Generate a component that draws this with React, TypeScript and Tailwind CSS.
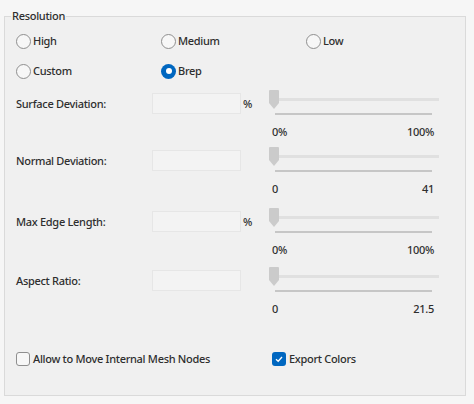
import React from 'react';

const font = { fontFamily: '"Noto Sans", "Open Sans", sans-serif' };

const Radio = ({ label, checked }: { label: string; checked?: boolean }) => (
  <div className="flex items-center h-[20px] w-[145px]">
    {checked ? (
      <span className="w-[15px] h-[15px] rounded-full bg-[#0067c0] flex items-center justify-center">
        <span className="w-[6px] h-[6px] rounded-full bg-white" />
      </span>
    ) : (
      <span className="w-[15px] h-[15px] rounded-full border border-[#8f8f8f] bg-[#f7f7f7]" />
    )}
    <span className="ml-[2px]">{label}</span>
  </div>
);

const Thumb = () => (
  <svg width="10" height="19" viewBox="0 0 10 19" className="absolute left-0 top-0">
    <path d="M1 0 H9 A1 1 0 0 1 10 1 V13 L5 19 L0 13 V1 A1 1 0 0 1 1 0 Z" fill="#cbcbcb" />
  </svg>
);

type FieldProps = {
  label: string;
  unit?: string;
  min: string;
  max: string;
  className: string;
};

const Field = ({ label, unit, min, max, className }: FieldProps) => (
  <div className={`flex items-start ${className}`}>
    <div className="flex items-center pt-[3px]">
      <span className="w-[136px]">{label}</span>
      <div className="w-[89px] h-[21px] bg-[#f3f3f3] border border-[#e6e6e6]" />
      <span className="w-[28px] pl-[2px]">{unit}</span>
    </div>
    <div className="w-[170px] flex flex-col">
      <div className="relative h-[19px] pt-[8px] pl-[3px]">
        <div className="h-[3px] bg-[#e0e0e0]" />
        <Thumb />
      </div>
      <div className="mt-[4px] ml-[6px] w-[157px] h-[2px] bg-[#c6c6c6]" />
      <div className="mt-[10px] flex justify-between pl-[3px] pr-[5px] h-[14px] items-center">
        <span>{min}</span>
        <span>{max}</span>
      </div>
    </div>
  </div>
);

const Check = ({ label, checked }: { label: string; checked?: boolean }) => (
  <div className="flex items-center h-[20px]">
    {checked ? (
      <span className="w-[14px] h-[14px] rounded-[3px] bg-[#0067c0] flex items-center justify-center">
        <svg width="10" height="10" viewBox="0 0 10 10">
          <path d="M2 5.2 L4.2 7.3 L8 3" stroke="white" strokeWidth="1.3" fill="none" />
        </svg>
      </span>
    ) : (
      <span className="w-[14px] h-[14px] rounded-[3px] border border-[#8f8f8f] bg-[#f7f7f7]" />
    )}
    <span className="ml-[3px]">{label}</span>
  </div>
);

export default function App() {
  return (
    <div className="w-[474px] h-[404px] bg-[#f6f6f6] overflow-hidden text-[11px] leading-[14px] font-medium tracking-[-0.3px] text-[#2e2e2e]" style={font}>
      <fieldset className="mt-[9px] ml-[4px] w-[462px] border border-[#dadada] bg-[#f0f0f0] pl-[11px] pb-[26px]">
        <legend className="-ml-[5px] px-[1px] leading-[14px]">Resolution</legend>
        <div className="flex mt-[8px]">
          <Radio label="High" />
          <Radio label="Medium" />
          <Radio label="Low" />
        </div>
        <div className="flex mt-[10px]">
          <Radio label="Custom" />
          <Radio label="Brep" checked />
        </div>
        <Field className="mt-[9px]" label="Surface Deviation:" unit="%" min="0%" max="100%" />
        <Field className="mt-[8px]" label="Normal Deviation:" min="0" max="41" />
        <Field className="mt-[12px]" label="Max Edge Length:" unit="%" min="0%" max="100%" />
        <Field className="mt-[10px]" label="Aspect Ratio:" min="0" max="21.5" />
        <div className="flex mt-[33px]">
          <div className="w-[256px]">
            <Check label="Allow to Move Internal Mesh Nodes" />
          </div>
          <Check label="Export Colors" checked />
        </div>
      </fieldset>
    </div>
  );
}
